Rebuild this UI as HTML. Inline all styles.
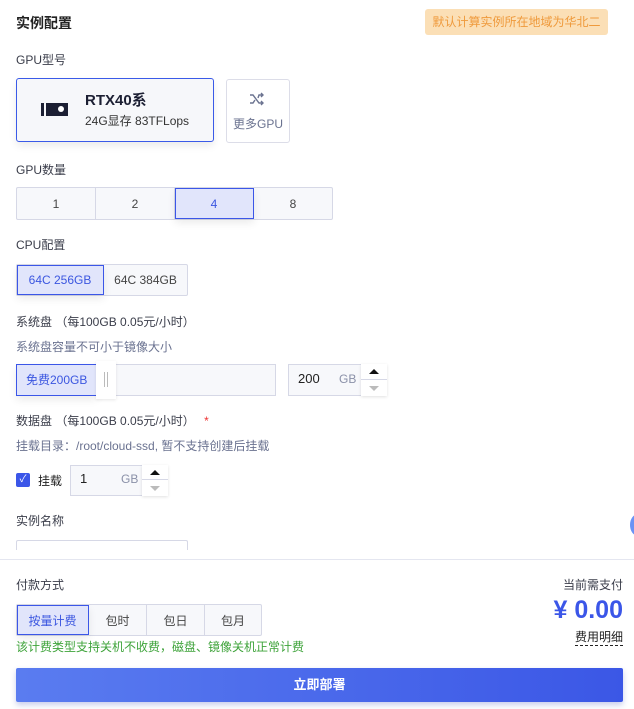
<!DOCTYPE html>
<html><head><meta charset="utf-8"><style>
*{box-sizing:border-box;margin:0;padding:0}
body{width:634px;height:709px;background:#fff;position:relative;overflow:hidden;font-family:"Liberation Sans","Noto Sans CJK SC",sans-serif;color:#333;font-size:12px}
.a{position:absolute;white-space:nowrap}
.lbl{font-size:12px;color:#3a3d4a;line-height:16px}
.seg{position:absolute;display:flex;border:1px solid #d6d8e6;border-radius:2px;background:#f7f8fb}
.seg div{display:flex;align-items:center;justify-content:center;border-right:1px solid #d6d8e6;font-size:12px;color:#444}
.seg div:last-child{border-right:none}
.seg .on{background:#e1e5fb;color:#3b56e0;outline:1px solid #3b56e8;outline-offset:-1px;box-shadow:0 4px 8px rgba(0,0,0,.08)}
.hint{font-size:12px;color:#6a7290}
</style></head><body>
<div class="a" style="left:16px;top:13px;font-size:14px;font-weight:bold;color:#222">实例配置</div>
<div class="a" style="left:425px;top:9px;width:183px;height:26px;background:#fbdfb6;border-radius:3px;color:#ef9a3c;font-size:12px;line-height:26px;text-align:center">默认计算实例所在地域为华北二</div>

<div class="a lbl" style="left:16px;top:52px">GPU型号</div>
<div class="a" style="left:16px;top:78px;width:198px;height:64px;border:1px solid #3a5ae8;border-radius:3px;background:#f6f7fa;box-shadow:0 4px 8px rgba(0,0,0,.08)"></div>
<div class="a" style="left:41px;top:103px;width:3px;height:13px;background:#1c1f33"></div>
<div class="a" style="left:46px;top:103px;width:22px;height:13px;background:#1c1f33"></div>
<div class="a" style="left:58px;top:106px;width:6px;height:6px;background:#fff;border-radius:50%"></div>
<div class="a" style="left:85px;top:89px;font-size:15px;font-weight:bold;color:#1c1f33">RTX40系</div>
<div class="a" style="left:85px;top:112px;font-size:12px;color:#333">24G显存 83TFLops</div>
<div class="a" style="left:226px;top:79px;width:64px;height:64px;border:1px solid #dcdde8;border-radius:3px;background:#fff"></div>
<svg class="a" style="left:249px;top:92px" width="16" height="14" viewBox="0 0 16 14" fill="none" stroke="#6b7390" stroke-width="1.4"><path d="M1 3h3l6 8h4M1 11h3l2-3M9 6l1-3h4M12 1l2 2-2 2M12 9l2 2-2 2"/></svg>
<div class="a" style="left:226px;top:115px;width:64px;text-align:center;font-size:12px;color:#6b7390">更多GPU</div>

<div class="a lbl" style="left:16px;top:162px">GPU数量</div>
<div class="seg" style="left:16px;top:187px;height:33px;width:317px">
<div style="width:79px">1</div><div style="width:79px">2</div><div class="on" style="width:79px">4</div><div style="width:78px">8</div></div>

<div class="a lbl" style="left:16px;top:237px">CPU配置</div>
<div class="seg" style="left:16px;top:264px;height:32px;width:172px">
<div class="on" style="width:87px">64C 256GB</div><div style="width:83px">64C 384GB</div></div>

<div class="a lbl" style="left:16px;top:314px">系统盘 （每100GB 0.05元/小时）</div>
<div class="a hint" style="left:16px;top:338px">系统盘容量不可小于镜像大小</div>
<div class="a" style="left:16px;top:364px;width:260px;height:32px;border:1px solid #d6d8e6;background:#f7f8fb"></div>
<div class="a" style="left:16px;top:364px;width:81px;height:32px;border:1px solid #3b56e8;background:#e1e5fb;color:#3b56e0;font-size:12px;line-height:30px;padding-left:9px;box-shadow:0 4px 8px rgba(0,0,0,.08)">免费200GB</div>
<div class="a" style="left:96px;top:361px;width:20px;height:38px;background:#fff;box-shadow:0 1px 3px rgba(0,0,0,.1)"></div>
<div class="a" style="left:104px;top:372px;width:1px;height:15px;background:#bbb"></div>
<div class="a" style="left:107px;top:372px;width:1px;height:15px;background:#bbb"></div>
<div class="a" style="left:288px;top:364px;width:90px;height:32px;border:1px solid #d6d8e6;background:#f7f8fb"></div>
<div class="a" style="left:298px;top:371px;font-size:13px;color:#222">200</div>
<div class="a" style="left:339px;top:372px;font-size:12px;color:#8a90a8">GB</div>
<div class="a" style="left:361px;top:364px;width:26px;height:32px;background:#fff;box-shadow:0 1px 3px rgba(0,0,0,.12)"></div>
<div class="a" style="left:361px;top:379px;width:26px;height:1px;background:#d6d8e6"></div>
<div class="a" style="left:369px;top:369px;border:5px solid transparent;border-bottom:5px solid #111;border-top:none"></div>
<div class="a" style="left:369px;top:386px;border:5px solid transparent;border-top:5px solid #bbb;border-bottom:none"></div>

<div class="a lbl" style="left:16px;top:413px">数据盘 （每100GB 0.05元/小时） <span style="color:#e33;margin-left:6px">*</span></div>
<div class="a hint" style="left:16px;top:437px">挂载目录：/root/cloud-ssd, 暂不支持创建后挂载</div>
<div class="a" style="left:16px;top:473px;width:14px;height:14px;background:#3b56e8;border-radius:2px;color:#fff;font-size:10px;line-height:14px;text-align:center">✓</div>
<div class="a" style="left:38px;top:472px;font-size:12px;color:#222">挂载</div>
<div class="a" style="left:70px;top:465px;width:98px;height:31px;border:1px solid #d6d8e6;background:#f7f8fb"></div>
<div class="a" style="left:80px;top:471px;font-size:13px;color:#222">1</div>
<div class="a" style="left:121px;top:472px;font-size:12px;color:#8a90a8">GB</div>
<div class="a" style="left:142px;top:465px;width:26px;height:31px;background:#fff;box-shadow:0 1px 3px rgba(0,0,0,.12)"></div>
<div class="a" style="left:142px;top:479px;width:26px;height:1px;background:#d6d8e6"></div>
<div class="a" style="left:150px;top:470px;border:5px solid transparent;border-bottom:5px solid #111;border-top:none"></div>
<div class="a" style="left:150px;top:486px;border:5px solid transparent;border-top:5px solid #bbb;border-bottom:none"></div>

<div class="a lbl" style="left:16px;top:513px">实例名称</div>
<div class="a" style="left:16px;top:540px;width:172px;height:10px;border:1px solid #d6d8e6;border-bottom:none;border-radius:2px 2px 0 0"></div>
<div class="a" style="left:630px;top:514px;width:16px;height:22px;border-radius:50%;background:#6b93f5"></div>

<div class="a" style="left:0;top:559px;width:634px;height:150px;background:#fff;border-top:1px solid #e4e6f0"></div>
<div class="a lbl" style="left:16px;top:577px">付款方式</div>
<div class="a lbl" style="right:11px;top:577px">当前需支付</div>
<div class="seg" style="left:16px;top:604px;height:32px;width:246px">
<div class="on" style="width:72px">按量计费</div><div style="width:58px">包时</div><div style="width:58px">包日</div><div style="width:56px">包月</div></div>
<div class="a" style="left:16px;top:638px;font-size:12px;color:#3ea33a">该计费类型支持关机不收费，磁盘、镜像关机正常计费</div>
<div class="a" style="right:11px;top:596px;font-size:25px;font-weight:bold;color:#3b56e8">¥ 0.00</div>
<div class="a" style="right:11px;top:629px;font-size:12px;color:#222;border-bottom:1px dashed #222;line-height:16px">费用明细</div>
<div class="a" style="left:16px;top:668px;width:607px;height:34px;border-radius:2px;background:linear-gradient(90deg,#5a7cf0,#3b57e6);box-shadow:0 3px 6px rgba(40,60,180,.25);color:#fff;font-size:13px;font-weight:bold;line-height:34px;text-align:center">立即部署</div>
</body></html>
